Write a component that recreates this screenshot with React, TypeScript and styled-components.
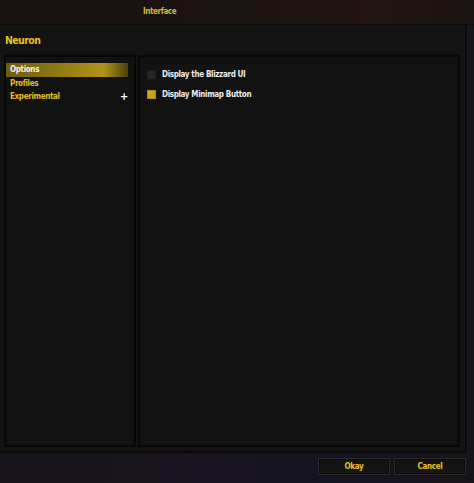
import styled, { createGlobalStyle } from 'styled-components';

const GlobalStyle = createGlobalStyle`
  html, body {
    margin: 0;
    padding: 0;
    background: #141218;
  }
  * {
    box-sizing: border-box;
  }
`;

const Page = styled.div`
  width: 474px;
  height: 483px;
  display: flex;
  flex-direction: column;
  background: linear-gradient(90deg, #16131a 0%, #1a1520 40%, #141320 70%, #17131a 100%);
  font-family: "DejaVu Sans Condensed", "DejaVu Sans", sans-serif;
  font-stretch: condensed;
  font-weight: 700;
  overflow: hidden;
`;

const TitleBar = styled.div`
  height: 25px;
  padding: 0 0 2px 143px;
  display: flex;
  align-items: center;
  background: linear-gradient(90deg, #171110 0%, #1b1311 50%, #221512 80%, #1a1311 100%);
  color: #d8b630;
  font-size: 8px;
  letter-spacing: -0.4px;
  border-bottom: 1px solid #0a0909;
`;

const Frame = styled.div`
  width: 467px;
  height: 428px;
  display: flex;
  flex-direction: column;
  background: #131313;
  border-right: 2px solid #0a0a0a;
  border-bottom: 2px solid #0a0a0a;
  box-shadow: 1px 0 0 #1c1c1c;
`;

const Heading = styled.div`
  height: 30px;
  padding: 9px 0 0 5px;
  color: #e4c020;
  font-size: 10.5px;
  letter-spacing: -0.6px;
`;

const Panels = styled.div`
  flex: 1;
  display: flex;
  gap: 2px;
  padding: 0 5px 4px 4px;
`;

const Panel = styled.div<{ $width?: number }>`
  ${(p) => (p.$width ? `width: ${p.$width}px;` : 'flex: 1;')}
  background: #121212;
  border: 2px solid #070707;
  display: flex;
  flex-direction: column;
`;

const NavList = styled.div`
  padding: 6px 6px 0 0;
  display: flex;
  flex-direction: column;
`;

const NavItem = styled.div<{ $active?: boolean }>`
  height: 13.5px;
  padding: 0 0 0 4px;
  display: flex;
  align-items: center;
  justify-content: space-between;
  font-size: 8px;
  letter-spacing: -0.35px;
  color: ${(p) => (p.$active ? '#f2f2f2' : '#e2be22')};
  background: ${(p) =>
    p.$active
      ? 'linear-gradient(90deg, #6e5d10 0%, #8a7412 35%, #b09418 80%, #4a400e 100%)'
      : 'transparent'};
`;

const Plus = styled.span`
  color: #ffffff;
  font-size: 11px;
  line-height: 1;
`;

const OptionList = styled.div`
  padding: 13px 0 0 7px;
  display: flex;
  flex-direction: column;
  gap: 11px;
`;

const OptionRow = styled.label`
  display: flex;
  align-items: center;
  gap: 6px;
  color: #ececec;
  font-size: 8px;
  letter-spacing: -0.35px;
`;

const Box = styled.span<{ $checked?: boolean }>`
  width: 9px;
  height: 9px;
  display: inline-block;
  background: ${(p) => (p.$checked ? '#c9a41c' : '#262626')};
  border: 1px solid ${(p) => (p.$checked ? '#a88818' : '#1e1e1e')};
`;

const Footer = styled.div`
  display: flex;
  justify-content: flex-end;
  gap: 4px;
  padding: 5px 8px 0 0;
`;

const Button = styled.div`
  width: 72px;
  height: 17px;
  display: flex;
  align-items: center;
  justify-content: center;
  background: #141414;
  border: 1px solid #2a2a2a;
  box-shadow: inset 0 0 0 1px #0c0c0c;
  color: #e8c420;
  font-size: 8px;
  letter-spacing: -0.35px;
`;

const App = () => {
  return (
    <>
      <GlobalStyle />
      <Page>
        <TitleBar>Interface</TitleBar>
        <Frame>
          <Heading>Neuron</Heading>
          <Panels>
            <Panel $width={132}>
              <NavList>
                <NavItem $active>Options</NavItem>
                <NavItem>Profiles</NavItem>
                <NavItem>
                  Experimental
                  <Plus>+</Plus>
                </NavItem>
              </NavList>
            </Panel>
            <Panel>
              <OptionList>
                <OptionRow>
                  <Box />
                  Display the Blizzard UI
                </OptionRow>
                <OptionRow>
                  <Box $checked />
                  Display Minimap Button
                </OptionRow>
              </OptionList>
            </Panel>
          </Panels>
        </Frame>
        <Footer>
          <Button>Okay</Button>
          <Button>Cancel</Button>
        </Footer>
      </Page>
    </>
  );
};

export default App;
